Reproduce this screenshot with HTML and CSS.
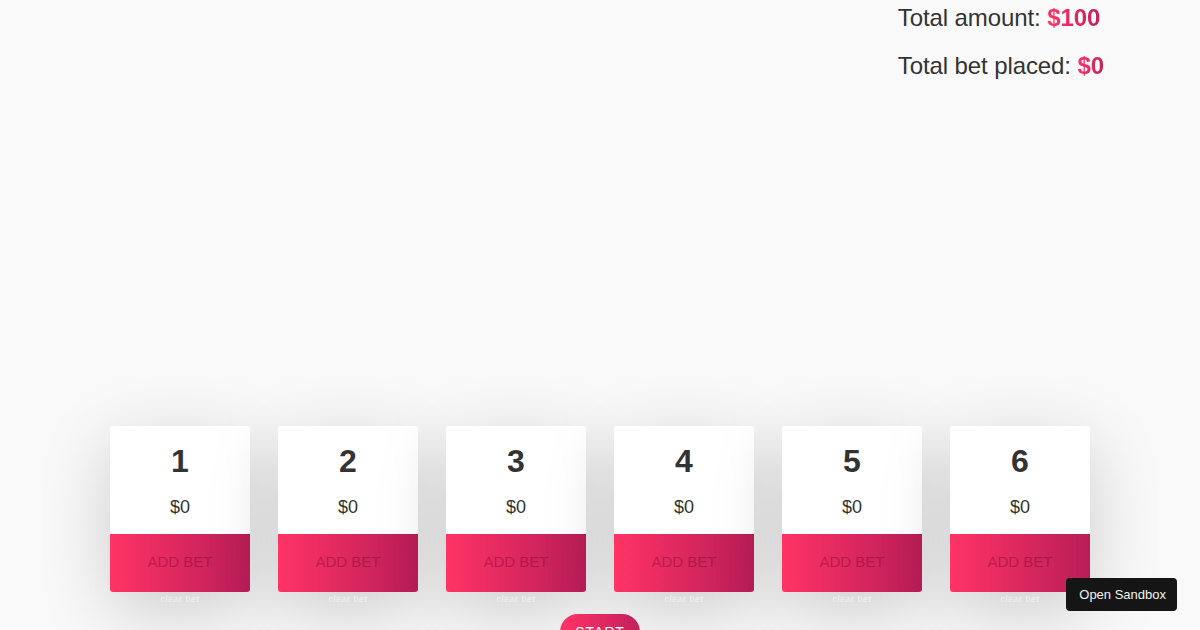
FILE: index.html
```html
<!DOCTYPE html>
<html lang="en">
<head>
    <meta charset="UTF-8">
    <meta name="viewport" content="width=device-width, initial-scale=1.0">
    <title>Dice Bet</title>
    <link rel="stylesheet" href="styles.css">
</head>
<body>

<div class="header">
    <div class="totals">
        <p class="total-line">Total amount: <span class="money">$100</span></p>
        <p class="total-line">Total bet placed: <span class="money">$0</span></p>
    </div>
</div>

<div class="board">
    <div class="slot">
        <div class="card">
            <div class="card-top">
                <div class="face">1</div>
                <div class="bet">$0</div>
            </div>
            <button class="add-btn">ADD BET</button>
        </div>
        <div class="clear-link">clear bet</div>
    </div>
    <div class="slot">
        <div class="card">
            <div class="card-top">
                <div class="face">2</div>
                <div class="bet">$0</div>
            </div>
            <button class="add-btn">ADD BET</button>
        </div>
        <div class="clear-link">clear bet</div>
    </div>
    <div class="slot">
        <div class="card">
            <div class="card-top">
                <div class="face">3</div>
                <div class="bet">$0</div>
            </div>
            <button class="add-btn">ADD BET</button>
        </div>
        <div class="clear-link">clear bet</div>
    </div>
    <div class="slot">
        <div class="card">
            <div class="card-top">
                <div class="face">4</div>
                <div class="bet">$0</div>
            </div>
            <button class="add-btn">ADD BET</button>
        </div>
        <div class="clear-link">clear bet</div>
    </div>
    <div class="slot">
        <div class="card">
            <div class="card-top">
                <div class="face">5</div>
                <div class="bet">$0</div>
            </div>
            <button class="add-btn">ADD BET</button>
        </div>
        <div class="clear-link">clear bet</div>
    </div>
    <div class="slot">
        <div class="card">
            <div class="card-top">
                <div class="face">6</div>
                <div class="bet">$0</div>
            </div>
            <button class="add-btn">ADD BET</button>
        </div>
        <div class="clear-link">clear bet</div>
    </div>
</div>

<div class="actions">
    <button class="start-btn">START</button>
</div>

<a class="sandbox-btn" href="#">Open Sandbox</a>

</body>
</html>
```

FILE: styles.css
```css
body {
    font-family: "Liberation Sans", Arial, sans-serif;
    background-color: #f9f9f9;
    color: #333;
    margin: 0;
    overflow: hidden;
}
.header {
    height: 426px;
    display: flex;
    justify-content: flex-end;
    padding-right: 96px;
    box-sizing: border-box;
}
.totals {
    display: flex;
    flex-direction: column;
    gap: 12px;
}
.total-line {
    margin: 0;
    font-size: 24px;
    line-height: 36px;
    letter-spacing: -0.1px;
    color: #333;
}
.money {
    font-weight: bold;
    background: linear-gradient(to right, #ff3366, #c2205c);
    -webkit-background-clip: text;
    background-clip: text;
    color: transparent;
}
.board {
    display: flex;
    justify-content: center;
    gap: 28px;
}
.slot {
    width: 140px;
    display: flex;
    flex-direction: column;
    align-items: center;
}
.card {
    width: 140px;
    border-radius: 3px;
    overflow: hidden;
    background-color: #fff;
    box-shadow: 0 18px 70px rgba(0, 0, 0, 0.18);
}
.card-top {
    height: 108px;
    text-align: center;
    padding-top: 16px;
    box-sizing: border-box;
}
.face {
    font-size: 32px;
    font-weight: bold;
    line-height: 38px;
}
.bet {
    font-size: 18px;
    line-height: 22px;
    margin-top: 16px;
}
.add-btn {
    display: block;
    width: 100%;
    height: 58px;
    border: none;
    padding: 0 0 4px;
    font-family: inherit;
    font-size: 15px;
    color: rgba(110, 0, 40, 0.38);
    background: linear-gradient(to right, #ff3366, #b91d58);
    cursor: pointer;
}
.clear-link {
    margin-top: 2px;
    font-size: 9px;
    line-height: 10px;
    letter-spacing: 0.5px;
    color: rgba(255, 255, 255, 0.6);
}
.actions {
    display: flex;
    justify-content: center;
    margin-top: 10px;
}
.start-btn {
    width: 80px;
    height: 36px;
    border: none;
    border-radius: 18px;
    font-family: inherit;
    font-size: 14px;
    letter-spacing: 1px;
    color: #fff;
    background: linear-gradient(to right, #ff3366, #c2205c);
    padding: 0;
    cursor: pointer;
}
.sandbox-btn {
    position: fixed;
    right: 23px;
    bottom: 19px;
    padding: 0 11px 0 13px;
    height: 33px;
    line-height: 33px;
    border-radius: 4px;
    background-color: #151515;
    color: #f2f2f2;
    font-family: "Liberation Sans", sans-serif;
    font-size: 13px;
    text-decoration: none;
}
```
